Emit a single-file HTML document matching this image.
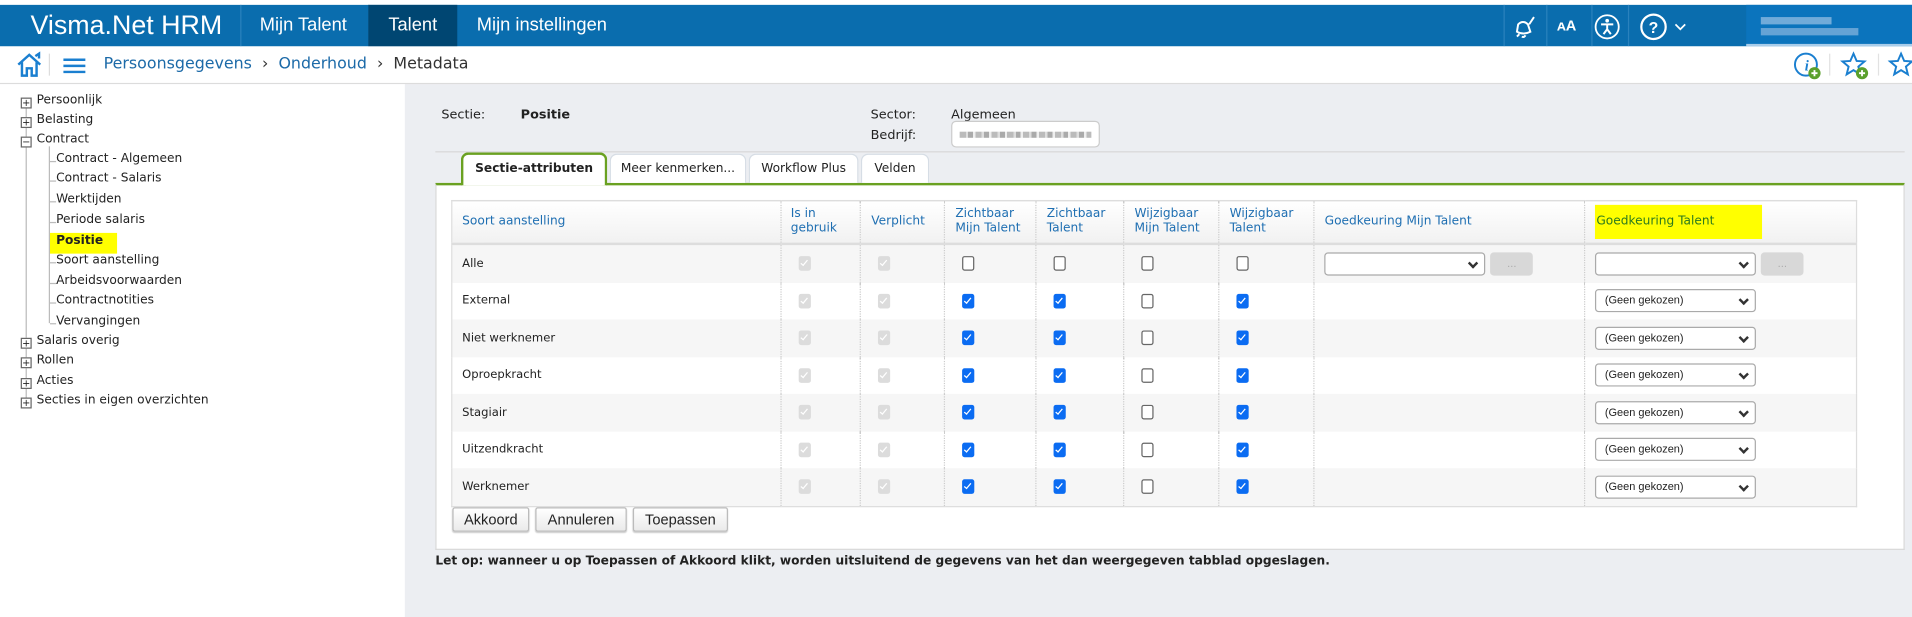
<!DOCTYPE html>
<html><head><meta charset="utf-8">
<style>
html,body{margin:0;padding:0;width:1912px;height:617px;overflow:hidden;background:#eceef2;}
#w{position:absolute;left:0;top:0;width:1568px;height:506px;transform:scale(1.2194);transform-origin:0 0;font-family:"DejaVu Sans",Verdana,sans-serif;font-size:10.5px;color:#222;background:#eceef2;}
.a{position:absolute;}
.hdr{left:0;top:4px;width:1568px;height:34px;background:#0a6dae;}
.hdr .t{position:absolute;top:0;height:34px;line-height:34px;color:#fff;font-family:"Liberation Sans",sans-serif;}
.sep{position:absolute;top:0;width:1px;height:34px;background:#2a82bd;}
.bc{left:0;top:38px;width:1568px;height:30px;background:#fff;border-bottom:1px solid #dcdcdc;}
.left{left:0;top:69px;width:332px;height:437px;background:#fff;}
.tree div{position:absolute;white-space:nowrap;font-size:10px;}
.pb{position:absolute;width:7px;height:7px;border:1px solid #666;background:#fff;font-size:8px !important;line-height:7px;text-align:center;}
.box{left:357px;top:150px;width:1205px;height:301px;background:#fff;border:1px solid #d8d8d8;border-top:2px solid #6aa121;box-sizing:border-box;}
.tab{position:absolute;top:126px;height:24px;line-height:23px;background:#fff;border:1px solid #d6dde5;border-bottom:none;border-radius:6px 6px 0 0;text-align:center;font-size:10px;box-sizing:border-box;white-space:nowrap;}
table{position:absolute;left:370px;top:164px;width:1153px;border-collapse:collapse;font-size:9.5px;}
th{height:34px;background:linear-gradient(#fff,#f1f1f1);color:#1f6fb2;font-weight:normal;text-align:left;padding:0 8px;border-left:1px dotted #ccc;border-bottom:2px solid #ddd;border-top:1px solid #ddd;line-height:12px;vertical-align:middle;font-size:10px;}
td{height:30.5px;padding:0 8px;border-left:1px dotted #ccc;vertical-align:middle;}
tr:nth-child(even) td{background:#f6f6f6;}
tr:last-child td{border-bottom:1px solid #ddd;}
th:first-child,td:first-child{border-left:1px solid #ddd;}
th:last-child,td:last-child{border-right:1px solid #ddd;}
.cb{display:inline-block;width:10px;height:12px;border-radius:2px;box-sizing:border-box;vertical-align:middle;position:relative;margin-left:6px;}
.cb.d{background:#dcdcdc;}
.cb.d::after,.cb.c::after{content:"";position:absolute;left:3px;top:2px;width:2px;height:5px;border:solid #fff;border-width:0 1.5px 1.5px 0;transform:rotate(40deg);}
.cb.c{background:#0b6cf2;}
.cb.u{border:1px solid #666;background:#fff;}
.sel{display:inline-block;width:132px;height:19px;border:1px solid #aaa;border-radius:3px;background:#fff;box-sizing:border-box;vertical-align:middle;position:relative;font-size:9px;line-height:17px;padding-left:7px;font-family:"Liberation Sans",sans-serif;}
.sel::after{content:"";position:absolute;right:6px;top:5px;width:4px;height:4px;border:solid #333;border-width:0 2px 2px 0;transform:rotate(45deg);}
.dots{display:inline-block;width:35px;height:19px;background:#d8d8d8;border-radius:3px;vertical-align:middle;margin-left:4px;color:#aaa;font-size:8px;text-align:center;line-height:19px;}
.btn{position:absolute;top:416px;height:20px;line-height:19px;border:1px solid #bbb;border-radius:2px;background:linear-gradient(#fff,#eaeaea);text-align:center;font-family:"Liberation Sans",sans-serif;font-size:12px;box-sizing:border-box;box-shadow:0 1px 1px #ccc;}
</style></head><body><div id="w">
<div class="a" style="left:0;top:0;width:1568px;height:4px;background:#fff"></div>
<div class="a hdr">
 <div class="t" style="left:25px;font-size:22px">Visma.Net HRM</div>
 <div class="sep" style="left:197px"></div>
 <div class="t" style="left:213px;font-size:15px">Mijn Talent</div>
 <div class="sep" style="left:302px"></div>
 <div class="t" style="left:302px;width:73px;background:#004672;text-align:center;font-size:15px">Talent</div>
 <div class="t" style="left:391px;font-size:15px">Mijn instellingen</div>
 <div class="sep" style="left:1233px"></div><div class="sep" style="left:1268px"></div><div class="sep" style="left:1305px"></div><div class="sep" style="left:1335px"></div>
 <svg class="a" style="left:1240px;top:8px" width="22" height="20" viewBox="0 0 22 20"><path d="M18 2 L14 8 M5 8 Q9 4 13 8 L15 14 Q9 17 4 14 Z M6 16 L4 18 M11 17 Q10 19 8 18" stroke="#fff" stroke-width="1.6" fill="none"/></svg>
 <div class="t" style="left:1277px;font-size:12px;font-weight:bold">ᴀA</div>
 <svg class="a" style="left:1307px;top:7px" width="22" height="22" viewBox="0 0 22 22"><circle cx="11" cy="11" r="9.5" stroke="#fff" stroke-width="1.5" fill="none"/><circle cx="11" cy="6" r="1.5" fill="#fff"/><path d="M6 9 L16 9 M11 9 L11 13 L8 17 M11 13 L14 17" stroke="#fff" stroke-width="1.6" fill="none"/></svg>
 <svg class="a" style="left:1344px;top:6px" width="44" height="24" viewBox="0 0 44 24"><circle cx="12" cy="12" r="10" stroke="#fff" stroke-width="1.8" fill="none"/><text x="12" y="17" font-size="13" font-weight="bold" fill="#fff" text-anchor="middle" font-family="Liberation Sans">?</text><path d="M30 10 L34 14 L38 10" stroke="#fff" stroke-width="1.4" fill="none"/></svg>
 <div class="a" style="left:1432px;top:0;width:136px;height:34px;background:#0b74bd;border-bottom:2px solid #a9cdea;box-sizing:border-box"></div>
 <div class="a" style="left:1444px;top:10px;width:58px;height:6px;background:#9cc3e6;opacity:.7"></div>
 <div class="a" style="left:1444px;top:19px;width:80px;height:6px;background:#8bb8e0;opacity:.7"></div>
</div>
<div class="a bc">
 <svg class="a" style="left:13px;top:4px" width="22" height="22" viewBox="0 0 22 22"><path d="M2 11 L11 3 L20 11 M5 9 V20 H9 V14 H13 V20 H17 V9 M16 4 L19 2 L19 6" stroke="#1a7fd0" stroke-width="2" fill="none"/></svg>
 <div class="a" style="left:40px;top:6px;width:1px;height:18px;background:#ddd"></div>
 <svg class="a" style="left:51px;top:9px" width="20" height="14"><path d="M1 2 H19 M1 7 H19 M1 12 H19" stroke="#1a7fd0" stroke-width="2"/></svg>
 <div class="a" style="left:85px;top:7px;font-size:13px;color:#1c6aa8;white-space:nowrap">Persoonsgegevens <span style="color:#333">&nbsp;›&nbsp;</span> Onderhoud <span style="color:#333">&nbsp;›&nbsp;</span> <span style="color:#333">Metadata</span></div>
 <svg class="a" style="left:1470px;top:4px" width="24" height="24" viewBox="0 0 24 24"><circle cx="11" cy="11" r="9" stroke="#1a7fd0" stroke-width="1.6" fill="none"/><text x="10" y="16" font-size="12" font-style="italic" font-weight="bold" fill="#1a7fd0" font-family="Liberation Serif">i</text><circle cx="18" cy="18" r="5" fill="#5aa02c"/><path d="M15.5 18 H20.5 M18 15.5 V20.5" stroke="#fff" stroke-width="1.5"/></svg>
 <div class="a" style="left:1500px;top:6px;width:1px;height:18px;background:#e2e2e2"></div>
 <svg class="a" style="left:1509px;top:4px" width="24" height="24" viewBox="0 0 24 24"><path d="M11 2 L13.6 8 L20 8.4 L15 12.6 L16.6 19 L11 15.5 L5.4 19 L7 12.6 L2 8.4 L8.4 8 Z" stroke="#1a7fd0" stroke-width="1.6" fill="none"/><circle cx="18" cy="18" r="5" fill="#5aa02c"/><path d="M15.5 18 H20.5 M18 15.5 V20.5" stroke="#fff" stroke-width="1.5"/></svg>
 <div class="a" style="left:1540px;top:6px;width:1px;height:18px;background:#e2e2e2"></div>
 <svg class="a" style="left:1548px;top:4px" width="22" height="22" viewBox="0 0 22 22"><path d="M11 2 L13.6 8 L20 8.4 L15 12.6 L16.6 19 L11 15.5 L5.4 19 L7 12.6 L2 8.4 L8.4 8 Z" stroke="#1a7fd0" stroke-width="1.6" fill="none"/></svg>
</div>
<div class="a left tree">
 <div style="left:21px;top:14px;width:1px;height:247px;background:#bbb;position:absolute"></div>
 <div style="left:40px;top:51px;width:1px;height:145px;background:#bbb;position:absolute"></div>
</div>
<div class="a tree" style="left:0;top:0">
 <div class="pb" style="left:17px;top:80px">+</div><div style="left:30px;top:77px">Persoonlijk</div>
 <div class="pb" style="left:17px;top:96px">+</div><div style="left:30px;top:93px">Belasting</div>
 <div class="pb" style="left:17px;top:112px">−</div><div style="left:30px;top:109px">Contract</div>
 <div style="left:41px;top:132px;width:5px;height:1px;background:#bbb"></div><div style="left:46px;top:125px">Contract - Algemeen</div>
 <div style="left:41px;top:148px;width:5px;height:1px;background:#bbb"></div><div style="left:46px;top:141px">Contract - Salaris</div>
 <div style="left:41px;top:165px;width:5px;height:1px;background:#bbb"></div><div style="left:46px;top:158px">Werktijden</div>
 <div style="left:41px;top:182px;width:5px;height:1px;background:#bbb"></div><div style="left:46px;top:175px">Periode salaris</div>
 <div style="left:41px;top:191px;width:55px;height:17px;background:#ffff00"></div><div style="left:46px;top:192px;font-weight:bold">Positie</div>
 <div style="left:41px;top:215px;width:5px;height:1px;background:#bbb"></div><div style="left:46px;top:208px">Soort aanstelling</div>
 <div style="left:41px;top:232px;width:5px;height:1px;background:#bbb"></div><div style="left:46px;top:225px">Arbeidsvoorwaarden</div>
 <div style="left:41px;top:248px;width:5px;height:1px;background:#bbb"></div><div style="left:46px;top:241px">Contractnotities</div>
 <div style="left:41px;top:265px;width:5px;height:1px;background:#bbb"></div><div style="left:46px;top:258px">Vervangingen</div>
 <div class="pb" style="left:17px;top:277px">+</div><div style="left:30px;top:274px">Salaris overig</div>
 <div class="pb" style="left:17px;top:293px">+</div><div style="left:30px;top:290px">Rollen</div>
 <div class="pb" style="left:17px;top:310px">+</div><div style="left:30px;top:307px">Acties</div>
 <div class="pb" style="left:17px;top:326px">+</div><div style="left:30px;top:323px">Secties in eigen overzichten</div>
</div>
<div class="a" style="left:362px;top:88px">Sectie:</div>
<div class="a" style="left:427px;top:88px;font-weight:bold">Positie</div>
<div class="a" style="left:714px;top:88px">Sector:</div>
<div class="a" style="left:780px;top:88px">Algemeen</div>
<div class="a" style="left:714px;top:105px">Bedrijf:</div>
<div class="a" style="left:780px;top:99px;width:122px;height:22px;background:#fff;border:1px solid #ccc;border-radius:4px;box-sizing:border-box"><div style="position:absolute;left:6px;top:8px;width:108px;height:5px;background:repeating-linear-gradient(90deg,#bbb 0 5px,#ddd 5px 7px,#aaa 7px 11px,#eee 11px 13px)"></div></div>
<div class="a" style="left:357px;top:124px;width:1205px;height:1px;background:#d8d8d8"></div>
<div class="a box"></div>
<div class="tab" style="left:378px;width:120px;top:125px;height:27px;border:2px solid #6aa121;border-bottom:none;font-weight:bold;line-height:24px">Sectie-attributen</div>
<div class="tab" style="left:500px;width:112px">Meer kenmerken...</div>
<div class="tab" style="left:614px;width:90px">Workflow Plus</div>
<div class="tab" style="left:706px;width:56px">Velden</div>
<table>
<colgroup><col style="width:270px"><col style="width:66px"><col style="width:69px"><col style="width:75px"><col style="width:72px"><col style="width:78px"><col style="width:78px"><col style="width:222px"><col style="width:223px"></colgroup>
<tr><th>Soort aanstelling</th><th>Is in<br>gebruik</th><th>Verplicht</th><th>Zichtbaar<br>Mijn Talent</th><th>Zichtbaar<br>Talent</th><th>Wijzigbaar<br>Mijn Talent</th><th>Wijzigbaar<br>Talent</th><th>Goedkeuring Mijn Talent</th><th><span style="background:#ffff00;color:#2c7a1e;display:inline-block;width:136px;height:28px;line-height:28px;padding-left:1px">Goedkeuring Talent</span></th></tr>
<tr><td>Alle</td><td><span class="cb d"></span></td><td><span class="cb d"></span></td><td><span class="cb u"></span></td><td><span class="cb u"></span></td><td><span class="cb u"></span></td><td><span class="cb u"></span></td><td><span class="sel"></span><span class="dots">...</span></td><td><span class="sel"></span><span class="dots">...</span></td></tr>
<tr><td>External</td><td><span class="cb d"></span></td><td><span class="cb d"></span></td><td><span class="cb c"></span></td><td><span class="cb c"></span></td><td><span class="cb u"></span></td><td><span class="cb c"></span></td><td></td><td><span class="sel">(Geen gekozen)</span></td></tr>
<tr><td>Niet werknemer</td><td><span class="cb d"></span></td><td><span class="cb d"></span></td><td><span class="cb c"></span></td><td><span class="cb c"></span></td><td><span class="cb u"></span></td><td><span class="cb c"></span></td><td></td><td><span class="sel">(Geen gekozen)</span></td></tr>
<tr><td>Oproepkracht</td><td><span class="cb d"></span></td><td><span class="cb d"></span></td><td><span class="cb c"></span></td><td><span class="cb c"></span></td><td><span class="cb u"></span></td><td><span class="cb c"></span></td><td></td><td><span class="sel">(Geen gekozen)</span></td></tr>
<tr><td>Stagiair</td><td><span class="cb d"></span></td><td><span class="cb d"></span></td><td><span class="cb c"></span></td><td><span class="cb c"></span></td><td><span class="cb u"></span></td><td><span class="cb c"></span></td><td></td><td><span class="sel">(Geen gekozen)</span></td></tr>
<tr><td>Uitzendkracht</td><td><span class="cb d"></span></td><td><span class="cb d"></span></td><td><span class="cb c"></span></td><td><span class="cb c"></span></td><td><span class="cb u"></span></td><td><span class="cb c"></span></td><td></td><td><span class="sel">(Geen gekozen)</span></td></tr>
<tr><td>Werknemer</td><td><span class="cb d"></span></td><td><span class="cb d"></span></td><td><span class="cb c"></span></td><td><span class="cb c"></span></td><td><span class="cb u"></span></td><td><span class="cb c"></span></td><td></td><td><span class="sel">(Geen gekozen)</span></td></tr>
</table>
<div class="btn" style="left:371px;width:63px">Akkoord</div>
<div class="btn" style="left:439px;width:75px">Annuleren</div>
<div class="btn" style="left:519px;width:78px">Toepassen</div>
<div class="a" style="left:357px;top:455px;font-weight:bold;font-size:10px;white-space:nowrap">Let op: wanneer u op Toepassen of Akkoord klikt, worden uitsluitend de gegevens van het dan weergegeven tabblad opgeslagen.</div>
</div></body></html>
